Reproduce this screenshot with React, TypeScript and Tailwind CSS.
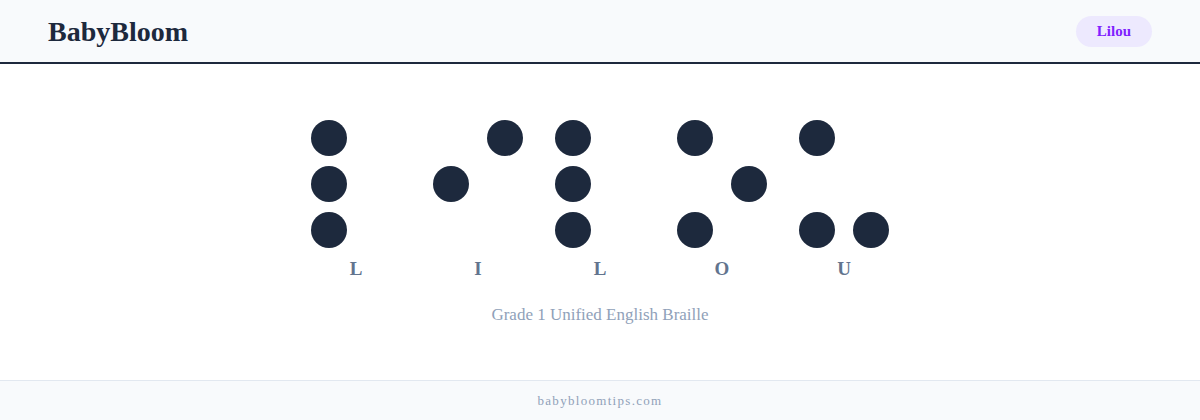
const LETTERS: { char: string; dots: number[] }[] = [
  { char: 'L', dots: [1, 2, 3] },
  { char: 'I', dots: [2, 4] },
  { char: 'L', dots: [1, 2, 3] },
  { char: 'O', dots: [1, 3, 5] },
  { char: 'U', dots: [1, 3, 6] },
]

// row-major order of the 2x3 braille cell
const CELL_ORDER = [1, 4, 2, 5, 3, 6]

const serif = "font-['Liberation_Serif','DejaVu_Serif',serif]"

function BrailleCell({ char, dots }: { char: string; dots: number[] }) {
  return (
    <div className="flex flex-col items-center">
      <div className="grid grid-cols-2 gap-x-[18px] gap-y-[10px]">
        {CELL_ORDER.map(n => (
          <div
            key={n}
            className={`h-9 w-9 rounded-full ${dots.includes(n) ? 'bg-slate-800' : 'bg-transparent'}`}
          />
        ))}
      </div>
      <span className="mt-[7px] text-[19px] leading-[28px] font-bold text-slate-500">{char}</span>
    </div>
  )
}

export default function App() {
  return (
    <div className={`flex h-screen flex-col bg-white ${serif}`}>
      <header className="flex h-[64px] shrink-0 items-center justify-between border-b-2 border-slate-800 bg-slate-50 px-12">
        <h1 className="pt-[2px] text-[28px] leading-none font-bold text-slate-800">BabyBloom</h1>
        <span className="rounded-full bg-violet-100 px-[21px] text-[15px] leading-[31px] font-bold text-violet-600">
          Lilou
        </span>
      </header>

      <main className="flex flex-1 flex-col items-center pt-[56px]">
        <div className="flex gap-8">
          {LETTERS.map((l, i) => (
            <BrailleCell key={i} char={l.char} dots={l.dots} />
          ))}
        </div>
        <p className="mt-[20px] text-[17px] leading-[24px] text-slate-400">Grade 1 Unified English Braille</p>
      </main>

      <footer className="flex h-[40px] shrink-0 items-center justify-center border-t border-slate-200 bg-slate-50">
        <span className="text-[13px] tracking-widest text-slate-400">babybloomtips.com</span>
      </footer>
    </div>
  )
}
